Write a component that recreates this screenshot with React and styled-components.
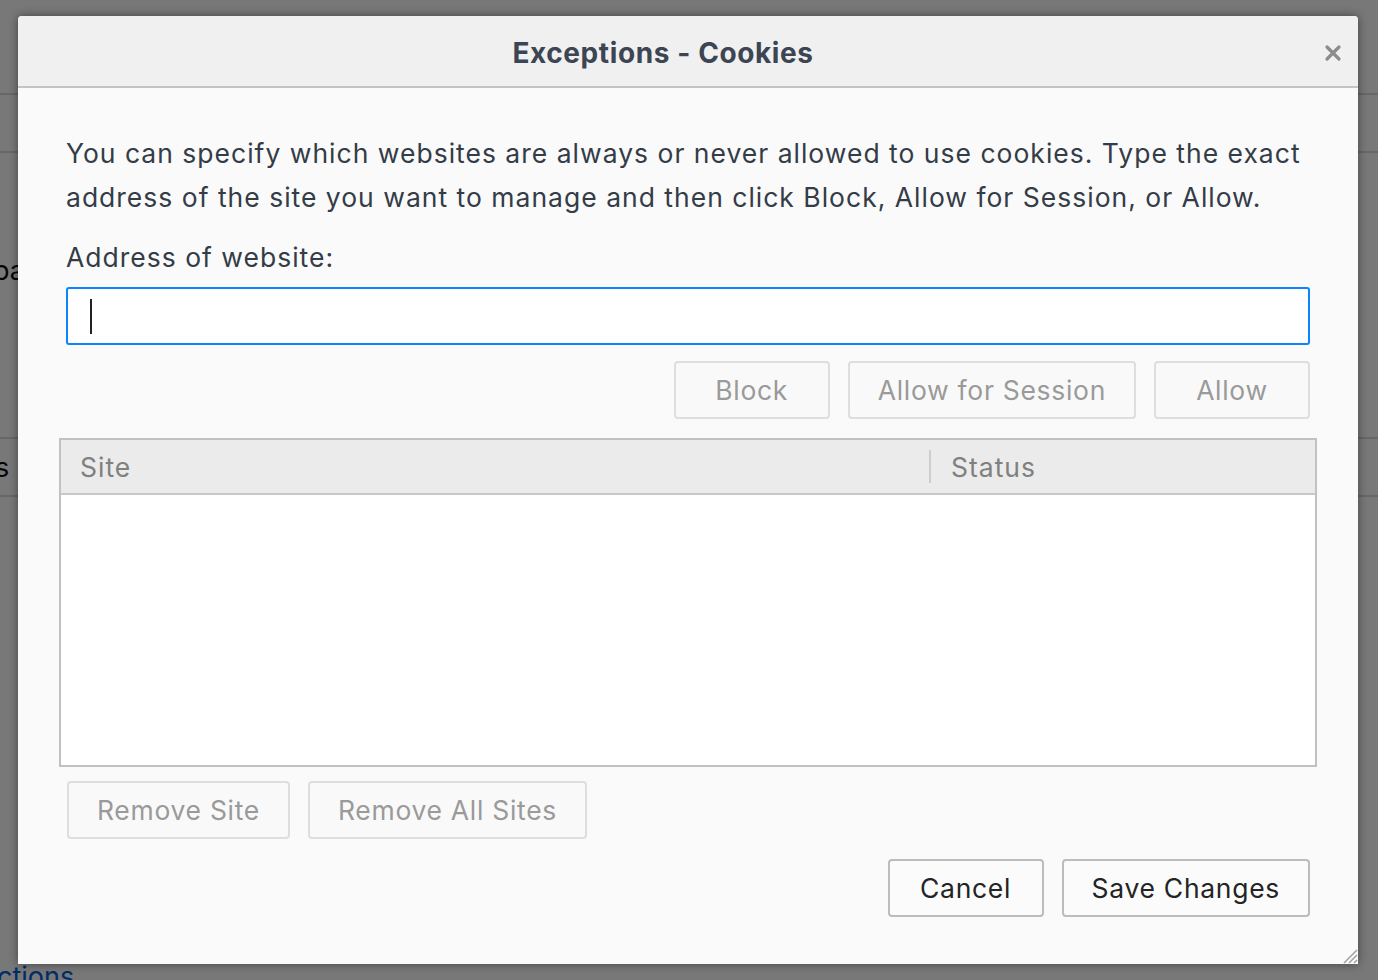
import React from 'react';
import styled, { createGlobalStyle } from 'styled-components';

const GlobalStyle = createGlobalStyle`
  html, body {
    margin: 0;
    padding: 0;
    width: 1378px;
    height: 980px;
    overflow: hidden;
    background: #ffffff;
  }
  * { box-sizing: border-box; }
`;

const font = `Inter, "Noto Sans", "Liberation Sans", sans-serif`;

const Page = styled.div`
  position: relative;
  width: 1378px;
  height: 980px;
  overflow: hidden;
  font-family: ${font};
  font-size: 27px;
  color: #0c0c0d;
  background: #ffffff;
`;

const BgRow = styled.div`
  height: ${p => p.h}px;
  display: flex;
  align-items: ${p => (p.top ? 'flex-start' : 'center')};
  border-bottom: ${p => (p.line ? '2px solid #dcdcdc' : 'none')};
`;

const BgText = styled.span`
  margin-left: ${p => p.indent}px;
  margin-top: ${p => p.mt || 0}px;
  color: ${p => (p.link ? '#0060df' : '#0c0c0d')};
  white-space: nowrap;
`;

const Overlay = styled.div`
  position: absolute;
  inset: 0;
  background: rgba(0, 0, 0, 0.53);
`;

const Dialog = styled.div`
  position: absolute;
  left: 18px;
  top: 16px;
  width: 1340px;
  background: #fafafa;
  border-radius: 4px 4px 0 0;
  box-shadow: 0 0 10px rgba(0, 0, 0, 0.45);
  display: flex;
  flex-direction: column;
  letter-spacing: 1px;
`;

const Header = styled.div`
  height: 72px;
  padding-right: 50px;
  background: #f0f0f0;
  border-bottom: 2px solid #c4c4c4;
  border-radius: 4px 4px 0 0;
  display: flex;
  align-items: center;
  justify-content: center;
  position: relative;
`;

const Title = styled.h1`
  margin: 4px 0 0;
  font-size: 28px;
  font-weight: 700;
  letter-spacing: 0.6px;
  color: #3c4553;
`;

const Close = styled.span`
  position: absolute;
  right: 16px;
  top: 28px;
  width: 18px;
  height: 18px;
  display: flex;
`;

const Body = styled.div`
  padding: 43px 48px 47px;
  display: flex;
  flex-direction: column;
`;

const Description = styled.p`
  margin: 0;
  font-size: 26.5px;
  line-height: 44px;
  color: #333c47;
`;

const Label = styled.div`
  margin-top: 16px;
  font-size: 26.5px;
  line-height: 44px;
  color: #333c47;
`;

const Field = styled.div`
  margin-top: 8px;
  height: 58px;
  border: 2px solid #0a84ff;
  border-radius: 3px;
  background: #ffffff;
  display: flex;
  align-items: center;
  padding-left: 22px;
`;

const Caret = styled.span`
  width: 2px;
  height: 35px;
  background: #222;
`;

const ButtonRow = styled.div`
  margin-top: ${p => p.mt}px;
  display: flex;
  gap: 18px;
  justify-content: ${p => (p.end ? 'flex-end' : 'flex-start')};
  padding-left: ${p => (p.end ? 0 : 1)}px;
`;

const Button = styled.button`
  height: 58px;
  min-width: 156px;
  padding: 0 28px;
  border-radius: 4px;
  font-family: ${font};
  font-size: 26.5px;
  letter-spacing: 0.7px;
  border: 2px solid ${p => (p.disabled ? '#dedede' : '#bcbcbc')};
  background: ${p => (p.disabled ? '#f9f9f9' : '#fbfbfb')};
  color: ${p => (p.disabled ? '#9a9a9a' : '#222426')};
  cursor: default;
`;

const Table = styled.div`
  margin: 19px -7px 0;
  height: 329px;
  border: 2px solid #c1c1c1;
  background: #ffffff;
  display: flex;
  flex-direction: column;
`;

const TableHead = styled.div`
  height: 55px;
  background: #ebebeb;
  border-bottom: 2px solid #c8c8c8;
  display: grid;
  grid-template-columns: 868px 1fr;
  align-items: center;
`;

const HeadCell = styled.div`
  height: 100%;
  display: flex;
  align-items: center;
  padding-left: ${p => p.pad}px;
  font-size: 26.5px;
  color: #808080;
  position: relative;
`;

const Divider = styled.span`
  position: absolute;
  left: 0;
  top: 10px;
  bottom: 10px;
  width: 2px;
  background: #cdcdcd;
`;

const Grip = styled.svg`
  position: absolute;
  right: 0;
  bottom: 0;
`;

export default function App() {
  return (
    <Page>
      <GlobalStyle />
      <BgRow h={95} line />
      <BgRow h={58} line />
      <BgRow h={234}>
        <BgText indent={-7}>pa</BgText>
      </BgRow>
      <BgRow h={52} line />
      <BgRow h={58} line>
        <BgText indent={-5}>s</BgText>
      </BgRow>
      <BgRow h={450} />
      <BgRow h={40} top>
        <BgText indent={-3} mt={13} link>ctions</BgText>
      </BgRow>
      <Overlay />
      <Dialog>
        <Header>
          <Title>Exceptions - Cookies</Title>
          <Close>
            <svg width="18" height="18" viewBox="0 0 18 18">
              <path d="M3 3 L15 15 M15 3 L3 15" stroke="#8c8c8c" strokeWidth="3.2" strokeLinecap="round" />
            </svg>
          </Close>
        </Header>
        <Body>
          <Description>
            You can specify which websites are always or never allowed to use cookies. Type the exact
            address of the site you want to manage and then click Block, Allow for Session, or Allow.
          </Description>
          <Label>Address of website:</Label>
          <Field>
            <Caret />
          </Field>
          <ButtonRow mt={16} end>
            <Button disabled>Block</Button>
            <Button disabled>Allow for Session</Button>
            <Button disabled>Allow</Button>
          </ButtonRow>
          <Table>
            <TableHead>
              <HeadCell pad={19}>Site</HeadCell>
              <HeadCell pad={22}>
                <Divider />
                Status
              </HeadCell>
            </TableHead>
          </Table>
          <ButtonRow mt={14}>
            <Button disabled>Remove Site</Button>
            <Button disabled>Remove All Sites</Button>
          </ButtonRow>
          <ButtonRow mt={20} end>
            <Button>Cancel</Button>
            <Button>Save Changes</Button>
          </ButtonRow>
        </Body>
        <Grip width="20" height="20" viewBox="0 0 20 20">
          <path d="M19 6 L6 19 M19 11 L11 19 M19 16 L16 19" stroke="#a0a0a0" strokeWidth="1.5" />
        </Grip>
      </Dialog>
    </Page>
  );
}
